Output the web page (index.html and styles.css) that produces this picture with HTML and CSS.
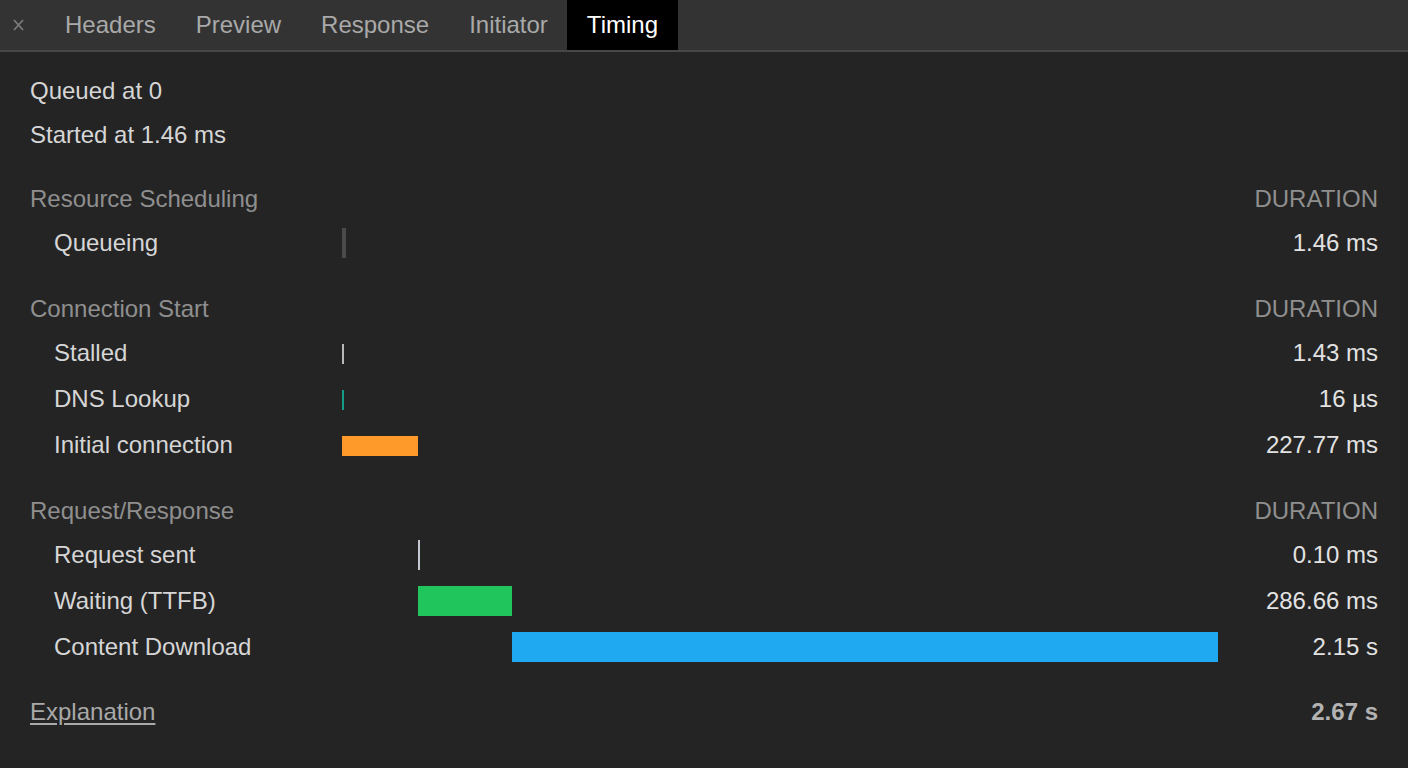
FILE: index.html
```html
<!DOCTYPE html>
<html lang="en">

<head>
  <meta charset="UTF-8">
  <meta name="viewport" content="width=device-width, initial-scale=1.0">
  <title>Timing</title>
  <link rel="stylesheet" href="styles.css">
</head>

<body>
  <header class="tabbar">
    <button class="close" aria-label="Close">
      <svg width="11" height="12" viewBox="0 0 11 12">
        <path d="M1 1 L10 11 M10 1 L1 11" stroke="#7a7a7a" stroke-width="1.8" fill="none" />
      </svg>
    </button>
    <ul class="tabs">
      <li class="tab">Headers</li>
      <li class="tab">Preview</li>
      <li class="tab">Response</li>
      <li class="tab">Initiator</li>
      <li class="tab active">Timing</li>
    </ul>
  </header>

  <main class="timing">
    <div class="summary">
      <p>Queued at 0</p>
      <p>Started at 1.46 ms</p>
    </div>

    <section class="group">
      <div class="group-head">
        <span>Resource Scheduling</span>
        <span class="duration">DURATION</span>
      </div>
      <div class="row">
        <span class="label">Queueing</span>
        <div class="track"><div class="bar queueing" style="width: 4px;"></div></div>
        <span class="value">1.46 ms</span>
      </div>
    </section>

    <section class="group">
      <div class="group-head">
        <span>Connection Start</span>
        <span class="duration">DURATION</span>
      </div>
      <div class="row">
        <span class="label">Stalled</span>
        <div class="track"><div class="bar thin stalled" style="width: 2px;"></div></div>
        <span class="value">1.43 ms</span>
      </div>
      <div class="row">
        <span class="label">DNS Lookup</span>
        <div class="track"><div class="bar thin dns" style="width: 2px;"></div></div>
        <span class="value">16 µs</span>
      </div>
      <div class="row">
        <span class="label">Initial connection</span>
        <div class="track"><div class="bar thin connect" style="width: 8.676%;"></div></div>
        <span class="value">227.77 ms</span>
      </div>
    </section>

    <section class="group">
      <div class="group-head">
        <span>Request/Response</span>
        <span class="duration">DURATION</span>
      </div>
      <div class="row">
        <span class="label">Request sent</span>
        <div class="track"><div class="bar sent" style="margin-left: 8.676%; width: 2px;"></div></div>
        <span class="value">0.10 ms</span>
      </div>
      <div class="row">
        <span class="label">Waiting (TTFB)</span>
        <div class="track"><div class="bar waiting" style="margin-left: 8.676%; width: 10.731%;"></div></div>
        <span class="value">286.66 ms</span>
      </div>
      <div class="row">
        <span class="label">Content Download</span>
        <div class="track"><div class="bar download" style="margin-left: 19.406%; width: 80.594%;"></div></div>
        <span class="value">2.15 s</span>
      </div>
    </section>

    <div class="total">
      <a class="explain" href="#">Explanation</a>
      <span class="total-value">2.67 s</span>
    </div>
  </main>
</body>

</html>
```

FILE: styles.css
```css
body {
  font-family: "Liberation Sans", Arial, sans-serif;
  font-size: 24px;
  margin: 0;
  padding: 0;
  background-color: #242424;
  color: #d4d4d4;
  box-sizing: border-box;
}

.tabbar {
  display: flex;
  align-items: stretch;
  height: 50px;
  background-color: #333333;
  border-bottom: 2px solid #474747;
}

.close {
  display: flex;
  align-items: center;
  background: none;
  border: none;
  padding: 0 21px 0 13px;
  margin: 0;
  cursor: pointer;
}

.tabs {
  display: flex;
  list-style-type: none;
  margin: 0;
  padding: 0;
}

.tab {
  display: flex;
  align-items: center;
  padding: 0 20px;
  color: #a9a9a9;
}

.tab.active {
  background-color: #000000;
  color: #ffffff;
  margin-left: -1px;
}

.timing {
  padding: 17px 30px 0 30px;
}

.summary p {
  margin: 0;
  height: 44px;
  line-height: 44px;
  color: #d6d6d6;
}

.group {
  margin-top: 21px;
}

.group + .group {
  margin-top: 22px;
}

.group-head {
  display: flex;
  justify-content: space-between;
  height: 42px;
  line-height: 42px;
  color: #8f8f8f;
}

.row {
  display: grid;
  grid-template-columns: 312px 1fr 160px;
  height: 46px;
  line-height: 46px;
}

.label {
  padding-left: 24px;
  color: #d6d6d6;
}

.track {
  display: flex;
  align-items: center;
}

.bar {
  height: 30px;
}

.bar.thin {
  height: 20px;
  margin-top: 2px;
}

.value {
  text-align: right;
  color: #e2e2e2;
}

.queueing {
  background-color: #4a4a4a;
}

.stalled {
  background-color: #b9b9b9;
}

.dns {
  background-color: #159a86;
}

.connect {
  background-color: #fd9a2a;
}

.sent {
  background-color: #c3c8d1;
}

.waiting {
  background-color: #20c65c;
}

.download {
  background-color: #1fa9f1;
}

.total {
  display: flex;
  justify-content: space-between;
  margin-top: 21px;
  height: 42px;
  line-height: 42px;
}

.explain {
  color: #a9a9a9;
  text-decoration: underline;
  text-underline-offset: 3px;
}

.total-value {
  font-weight: bold;
  color: #b3b3b3;
}
```
